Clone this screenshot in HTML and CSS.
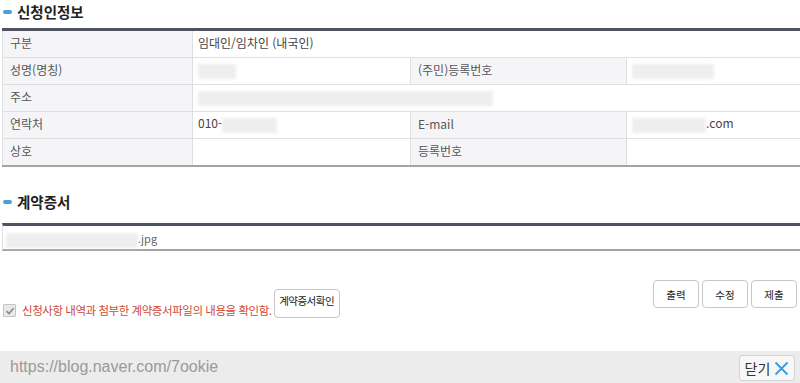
FILE: index.html
```html
<!DOCTYPE html>
<html lang="ko">
<head>
<meta charset="utf-8">
<link rel="stylesheet" href="styles.css">
</head>
<body>
<div class="page">
  <h2 class="sec-title"><span class="bullet"></span>신청인정보</h2>
  <table class="info">
    <colgroup>
      <col class="c1"><col class="c2"><col class="c3"><col class="c4">
    </colgroup>
    <tr><th>구분</th><td colspan="3">임대인/임차인 (내국인)</td></tr>
    <tr><th>성명(명칭)</th><td><span class="blur w38"></span></td><th>(주민)등록번호</th><td><span class="blur w82"></span></td></tr>
    <tr><th>주소</th><td colspan="3"><span class="blur w295"></span></td></tr>
    <tr><th>연락처</th><td>010-<span class="blur w55"></span></td><th>E-mail</th><td><span class="blur w74"></span>.com</td></tr>
    <tr><th>상호</th><td></td><th>등록번호</th><td></td></tr>
  </table>

  <h2 class="sec-title sec2"><span class="bullet"></span>계약증서</h2>
  <div class="file-box"><span class="blur w132"></span>.jpg</div>

  <div class="actions">
    <div class="confirm">
      <span class="chk"><svg width="10" height="10" viewBox="0 0 10 10"><path d="M1.5 5.2 L4 7.6 L8.6 2.2" fill="none" stroke="#8a8a8a" stroke-width="1.6"/></svg></span>
      <span class="confirm-text">신청사항 내역과 첨부한 계약증서파일의 내용을 확인함.</span>
      <button class="btn-doc">계약증서확인</button>
    </div>
    <div class="btns">
      <button class="btn">출력</button>
      <button class="btn">수정</button>
      <button class="btn">제출</button>
    </div>
  </div>
</div>
<footer class="footer">
  <span class="url">https://blog.naver.com/7ookie</span>
  <button class="close">닫기<svg width="15" height="15" viewBox="0 0 15 15"><path d="M1.5 1.5 L13.5 13.5 M13.5 1.5 L1.5 13.5" stroke="#3d9ad8" stroke-width="1.8" fill="none"/></svg></button>
</footer>
</body>
</html>
```
FILE: styles.css
```css
html, body { margin: 0; padding: 0; background: #fff; }
body {
  width: 800px; height: 383px; overflow: hidden;
  font-family: "Noto Sans CJK KR", "Noto Sans", sans-serif;
  font-size: 12px; color: #555;
  display: flex; flex-direction: column;
}
.page { flex: 1; padding-left: 2px; }
.sec-title {
  margin: 0; height: 30px; display: flex; align-items: flex-start;
  font-size: 14.5px; font-weight: bold; color: #222; line-height: 24px;
  padding-top: 0;
}
.sec-title .bullet {
  width: 9px; height: 4px; border-radius: 2px; background: #4aa0d8;
  margin: 10px 5px 0 1px; flex: none;
}
.sec2 { margin-top: 23px; height: 33px; }

.info {
  width: 798px; border-collapse: collapse; table-layout: fixed;
  border-top: 3px solid #4f535f; border-bottom: 2px solid #a3a4aa;
  margin-top: -2px;
}
.info col.c1 { width: 190px; }
.info col.c2 { width: 218px; }
.info col.c3 { width: 216px; }
.info col.c4 { width: 174px; }
.info th, .info td {
  height: 24px; padding: 0 0 2px 7px; border: 1px solid #dedfe3;
  text-align: left; font-weight: normal; font-size: 12px; color: #555;
  white-space: nowrap; vertical-align: middle; line-height: 16px;
}
.info tr:first-child th, .info tr:first-child td { border-top: 0; }
.info tr:last-child th, .info tr:last-child td { border-bottom: 0; }
.info th { background: #f5f5f7; }
.info td { background: #fff; padding-left: 5px; color: #444; }
.info td:last-child { border-right: 0; }

.blur {
  display: inline-block; height: 15px; vertical-align: middle;
  background: #eeeeee; filter: blur(1.5px);
}
.w38 { width: 38px; } .w82 { width: 82px; } .w295 { width: 295px; }
.w55 { width: 55px; } .w74 { width: 74px; } .w132 { width: 132px; }

.file-box {
  width: 798px; box-sizing: border-box; height: 28px;
  border-top: 3px solid #4f535f; border-bottom: 2px solid #a3a4aa;
  border-left: 1px solid #dedfe3;
  padding: 3px 0 0 3px; font-size: 11px; color: #666; line-height: 18px;
}

.actions {
  display: flex; justify-content: space-between; align-items: flex-start;
  margin-top: 29px;
}
.confirm { display: flex; align-items: flex-start; margin-top: 9px; }
.chk {
  width: 11px; height: 11px; border: 1px solid #c4c4c4; background: #e9e9e9;
  display: flex; align-items: center; justify-content: center; margin: 15px 6px 0 1px;
  border-radius: 1px;
}
.confirm-text { color: #cf4a34; font-size: 11.5px; margin-top: 13px; letter-spacing: -0.45px; line-height: 16px; }
.btn-doc {
  margin-left: 2px; width: 66px; height: 29px; padding: 3px 0 0 0;
  background: #fff; border: 1px solid #c7c7c7; border-radius: 4px;
  font-family: inherit; font-size: 10.5px; color: #222; display: flex; justify-content: center;
  align-items: flex-start; letter-spacing: -0.5px;
}
.btns { display: flex; gap: 3px; margin-right: 3px; }
.btn {
  width: 46px; height: 28px; background: #fff; border: 1px solid #c7c7c7;
  border-radius: 4px; font-family: inherit; font-size: 10.5px; color: #222; padding: 0;
}

.footer {
  height: 32px; background: #ececec; display: flex; align-items: center;
  justify-content: space-between; padding: 0 5px 0 10px; flex: none;
}
.url { font-family: "Liberation Sans", Arial, sans-serif; font-size: 16px; color: #9a9a9a; }
.close {
  height: 26px; width: 56px; background: #f7f7f7; border: 1px solid #d3d3d3; border-radius: 3px;
  display: flex; align-items: center; justify-content: center; gap: 4px; padding: 0;
  font-family: inherit; font-size: 14px; color: #333; margin-top: 2px;
}
```
